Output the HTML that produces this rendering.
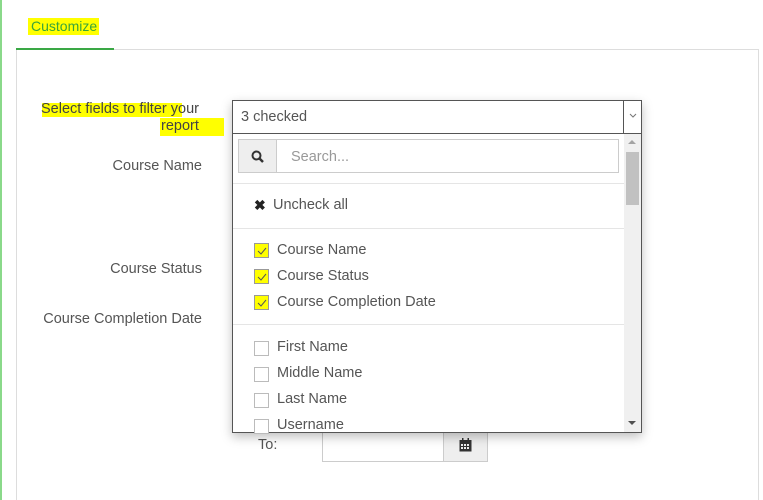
<!DOCTYPE html>
<html><head><style>
*{box-sizing:border-box;margin:0;padding:0}
html,body{width:763px;height:500px;overflow:hidden}
body{background:#fff;font-family:"Liberation Sans",sans-serif;font-size:14.5px;color:#555;position:relative}
.a{position:absolute}
.hl{background:#ffff00}
.lbl{position:absolute;right:561px;text-align:right;white-space:nowrap}
.cb{position:absolute;left:21px;width:15px;height:15px;border:1px solid #bbb;background:#fff}
.cb.on{background:#ffff00;border-color:#999}
.it{position:absolute;left:44px;white-space:nowrap;color:#555}
</style></head><body>
<div class="a" style="left:0;top:0;width:2px;height:500px;background:#8ad98a"></div>
<div class="a hl" style="left:28px;top:18px;width:71px;height:17px"></div>
<div class="a" style="left:31px;top:18px;color:#3aa53a;font-size:14px">Customize</div>
<div class="a" style="left:16px;top:49px;width:743px;height:451px;border:1px solid #ddd;border-bottom:none"></div>
<div class="a" style="left:16px;top:48px;width:98px;height:2px;background:#3aa845"></div>

<div class="a hl" style="left:42px;top:103px;width:140px;height:14px"></div>
<div class="a hl" style="left:160px;top:118px;width:64px;height:18px"></div>
<div class="a" style="left:41px;top:101px;color:#444">Select fields to filter your</div>
<div class="a" style="left:161px;top:118px;color:#444">report</div>
<div class="lbl" style="top:158px">Course Name</div>
<div class="lbl" style="top:261px">Course Status</div>
<div class="lbl" style="top:311px">Course Completion Date</div>

<div class="a" style="left:258px;top:437px">To:</div>
<div class="a" style="left:322px;top:431px;width:166px;height:31px;border:1px solid #ccc"></div>
<div class="a" style="left:443px;top:432px;width:44px;height:29px;background:#eee;border-left:1px solid #ccc"></div>
<svg class="a" style="left:459px;top:438px" width="13" height="14" viewBox="0 0 13 14"><rect x="0.5" y="2" width="12" height="11.5" fill="#333"/><g fill="#eee"><rect x="2" y="6" width="2" height="2"/><rect x="5" y="6" width="2" height="2"/><rect x="8" y="6" width="2" height="2"/><rect x="2" y="9" width="2" height="2"/><rect x="5" y="9" width="2" height="2"/><rect x="8" y="9" width="2" height="2"/></g><rect x="3" y="0" width="1.5" height="3" fill="#333"/><rect x="8.5" y="0" width="1.5" height="3" fill="#333"/></svg>

<div class="a" style="left:232px;top:100px;width:410px;height:333px;border:1px solid #555;background:#fff;box-shadow:0 4px 10px rgba(0,0,0,.25)">
 <div class="a" style="left:8px;top:8px">3 checked</div>
 <div class="a" style="left:390px;top:0;width:1px;height:32px;background:#555"></div>
 <svg class="a" style="left:396px;top:12px" width="8" height="6"><path d="M1 1 L4 4 L7 1" stroke="#777" fill="none"/></svg>
 <div class="a" style="left:0;top:32px;width:408px;height:1px;background:#555"></div>
 <div class="a" style="left:391px;top:33px;width:17px;height:298px;background:#f0f0f0"></div>
 <div class="a" style="left:393px;top:51px;width:13px;height:53px;background:#c1c1c1"></div>
 <svg class="a" style="left:395px;top:38px" width="8" height="5"><path d="M0 5 L4 1 L8 5Z" fill="#a3a3a3"/></svg>
 <svg class="a" style="left:395px;top:320px" width="8" height="5"><path d="M0 0 L4 4 L8 0Z" fill="#505050"/></svg>
 <div class="a" style="left:5px;top:38px;width:381px;height:34px;border:1px solid #ccc"></div>
 <div class="a" style="left:6px;top:39px;width:38px;height:32px;background:#eee;border-right:1px solid #ccc"></div>
 <svg class="a" style="left:18px;top:49px" width="14" height="14"><circle cx="5.5" cy="5.5" r="4" stroke="#333" stroke-width="2" fill="none"/><path d="M8.5 8.5 L12 12" stroke="#333" stroke-width="2.5"/></svg>
 <div class="a" style="left:58px;top:48px;color:#999">Search...</div>
 <div class="a" style="left:0;top:82px;width:391px;height:1px;background:#e5e5e5"></div>
 <div class="a" style="left:21px;top:96px;color:#222;font-size:14px;font-weight:bold">✖</div>
 <div class="a" style="left:40px;top:96px">Uncheck all</div>
 <div class="a" style="left:0;top:127px;width:391px;height:1px;background:#e5e5e5"></div>
 <div class="cb on" style="top:142px"></div><svg class="a" style="left:24px;top:146px" width="10" height="8"><path d="M1 4 L4 7 L9 1" stroke="#555" fill="none"/></svg><div class="it" style="top:141px">Course Name</div>
 <div class="cb on" style="top:168px"></div><svg class="a" style="left:24px;top:172px" width="10" height="8"><path d="M1 4 L4 7 L9 1" stroke="#555" fill="none"/></svg><div class="it" style="top:167px">Course Status</div>
 <div class="cb on" style="top:194px"></div><svg class="a" style="left:24px;top:198px" width="10" height="8"><path d="M1 4 L4 7 L9 1" stroke="#555" fill="none"/></svg><div class="it" style="top:193px">Course Completion Date</div>
 <div class="a" style="left:0;top:223px;width:391px;height:1px;background:#e5e5e5"></div>
 <div class="cb" style="top:240px"></div><div class="it" style="top:238px">First Name</div>
 <div class="cb" style="top:266px"></div><div class="it" style="top:264px">Middle Name</div>
 <div class="cb" style="top:292px"></div><div class="it" style="top:290px">Last Name</div>
 <div class="cb" style="top:318px"></div><div class="it" style="top:316px">Username</div>
</div>
</body></html>
